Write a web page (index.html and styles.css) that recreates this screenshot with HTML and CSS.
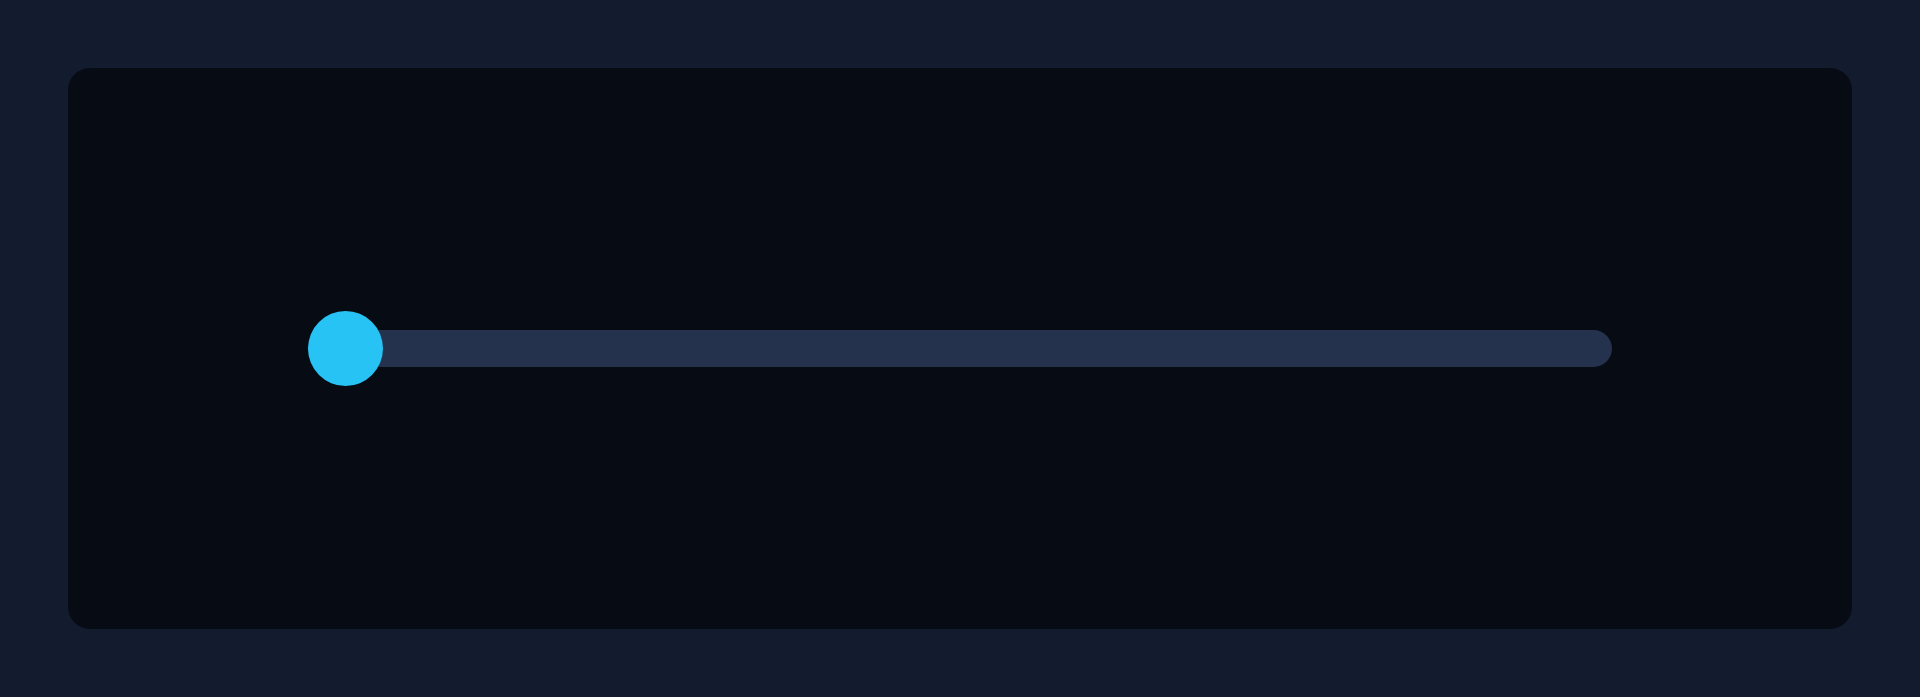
FILE: index.html
```html
<!DOCTYPE html>
<html lang="en">
<head>
  <meta charset="UTF-8">
  <title>Slider</title>
  <meta name="viewport" content="width=device-width,initial-scale=1.0">
  <link rel="stylesheet" href="styles.css">
</head>
<body>
  <div id="stage">
    <div id="panel">
      <div class="slider" role="slider" aria-valuemin="0" aria-valuemax="100" aria-valuenow="0">
        <div class="track"></div>
        <div class="knob"></div>
      </div>
    </div>
  </div>
</body>
</html>
```

FILE: styles.css
```css
html, body {margin:0; padding:0; height:100%; width:100%; font-family:"Liberation Sans",Arial,sans-serif; background:#131b2e;}
#stage {box-sizing:border-box; height:100vh; padding:68px; display:flex;}
#panel {flex:1; display:flex; align-items:center; padding:0 240px; background:#070b14; border-radius:22px;}
.slider {position:relative; flex:1; height:75px; display:flex; align-items:center;}
.track {flex:1; height:37px; border-radius:19px; background:#24324e;}
.knob {position:absolute; left:0; top:0; width:75px; height:75px; border-radius:50%; background:#27c3f5;}
```
